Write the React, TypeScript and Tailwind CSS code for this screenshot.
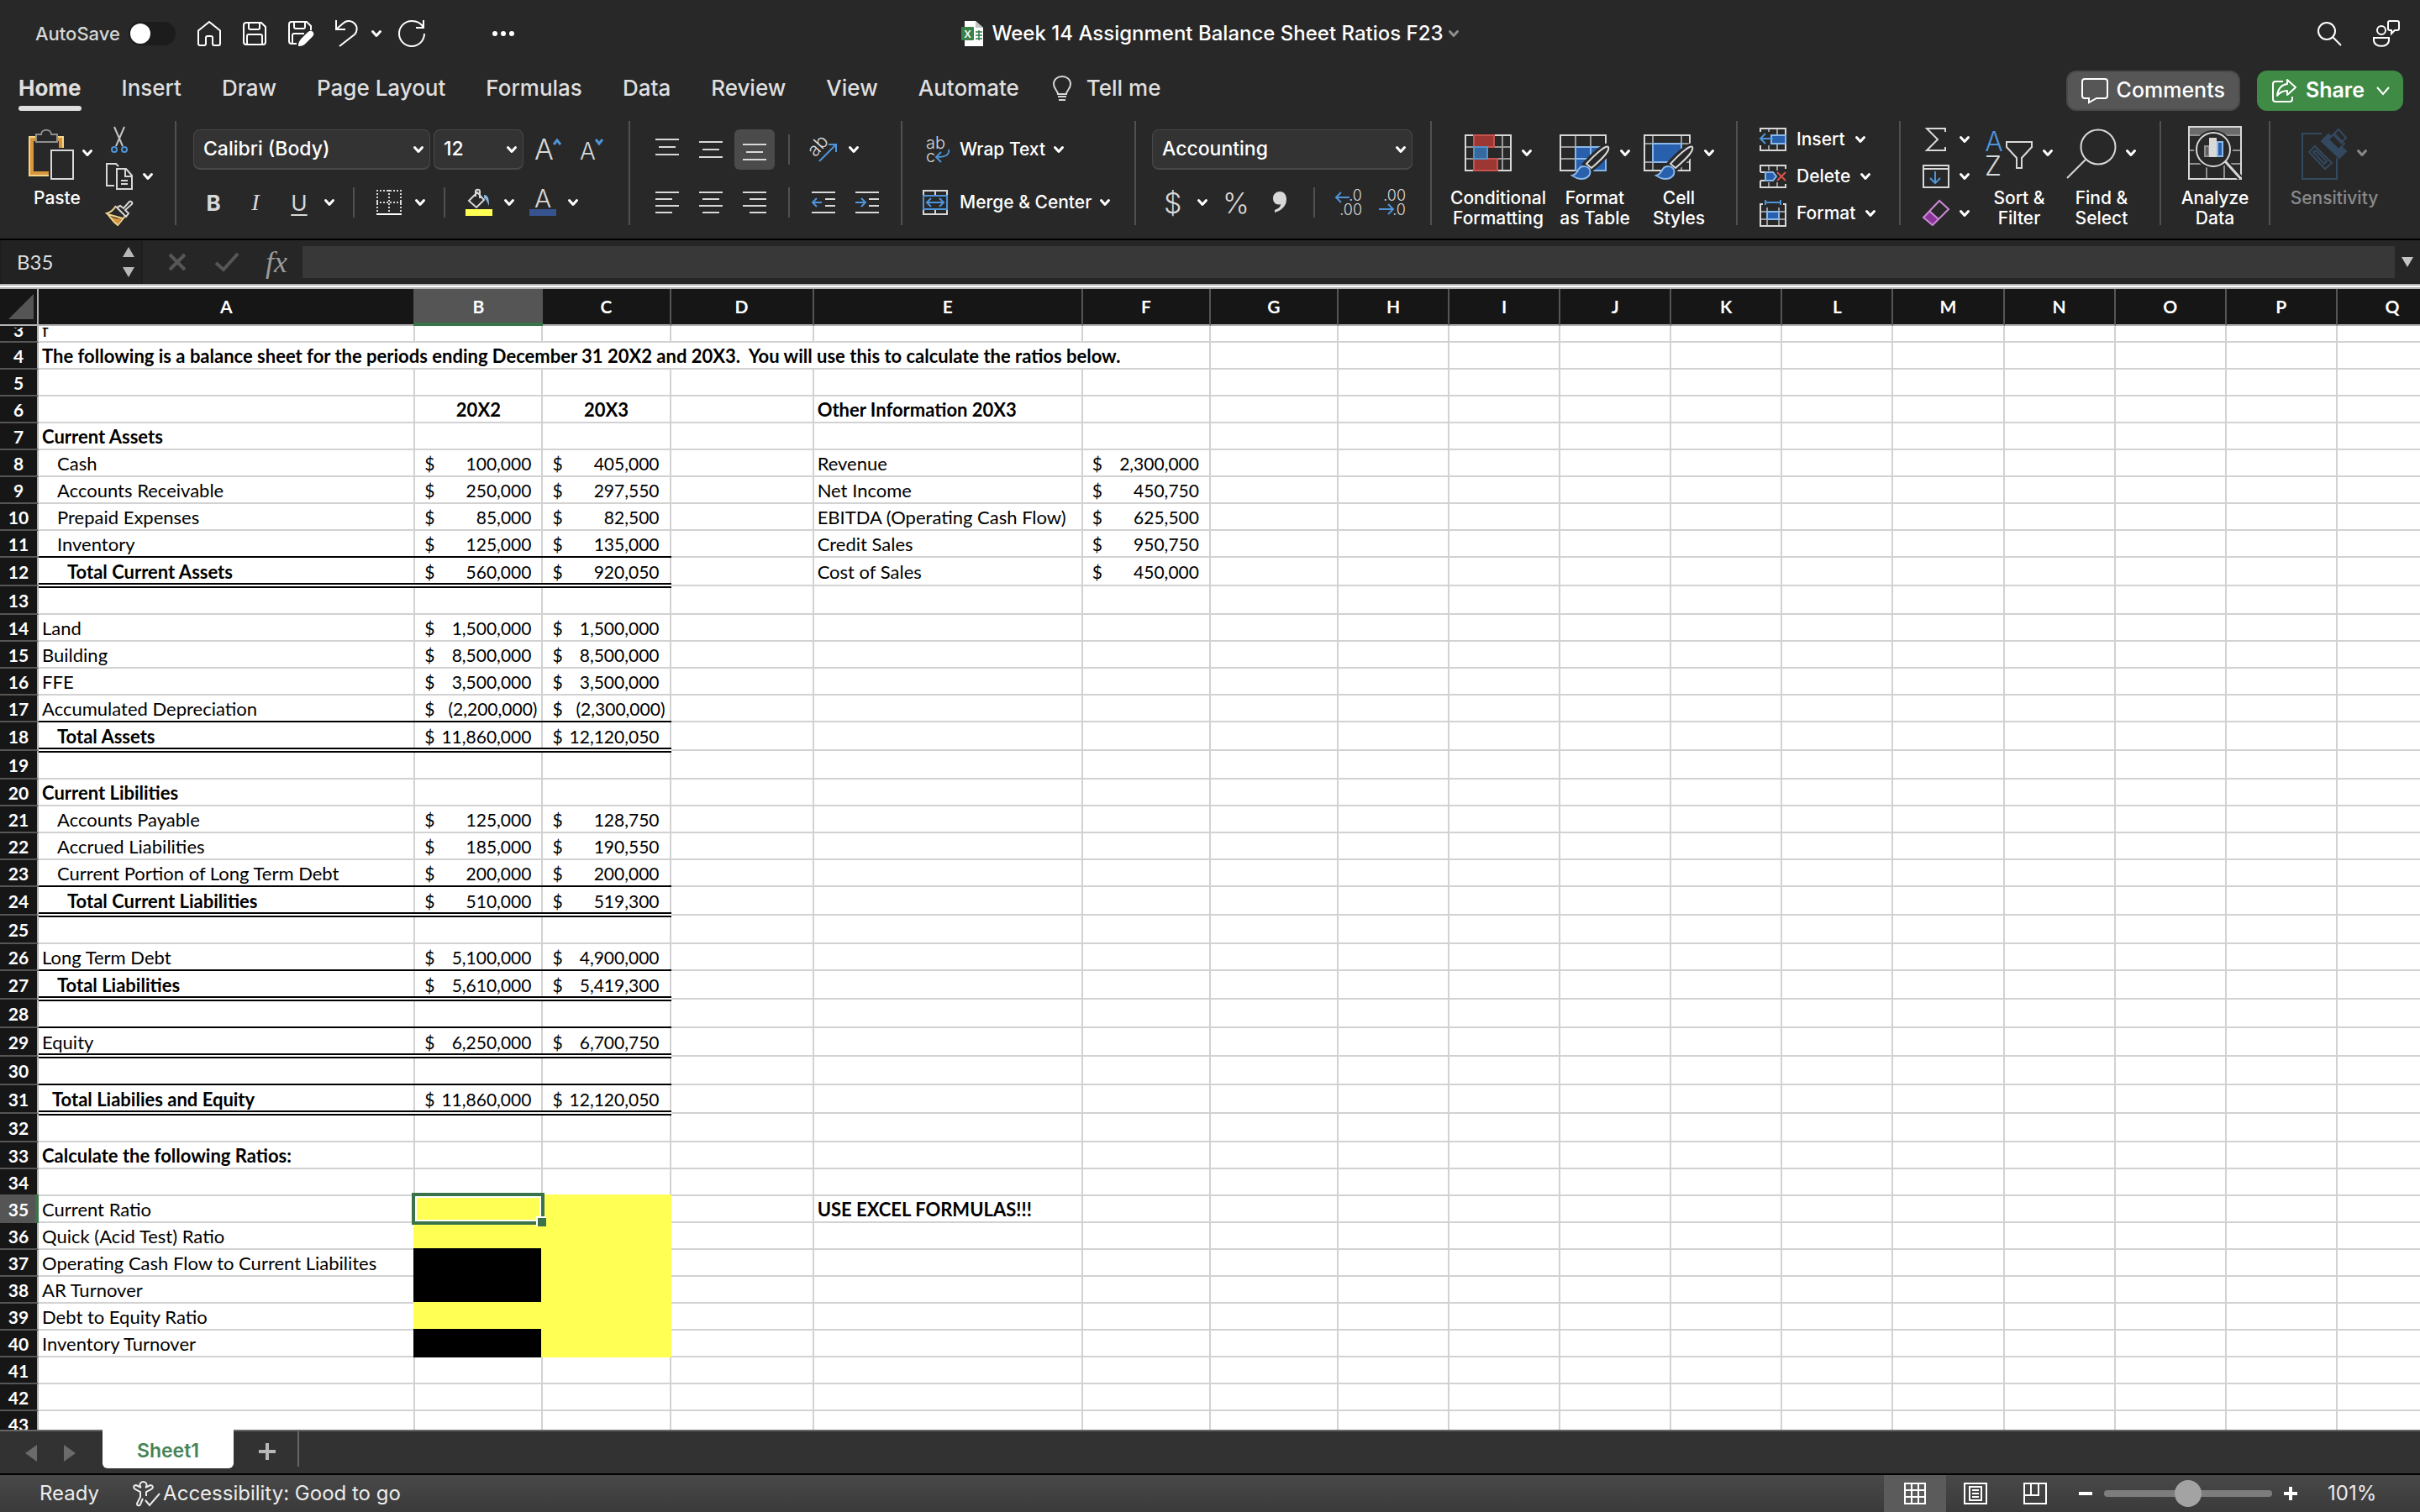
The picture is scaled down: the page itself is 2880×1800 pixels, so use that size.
import React from 'react';
import clsx from 'clsx';

/* ---------- data ---------- */

type Cell = {
  text?: string;
  money?: string;
  bold?: boolean;
  center?: boolean;
  indent?: number;
  fill?: 'yellow' | 'black';
  selected?: boolean;
};

type Row = {
  n: number;
  tall?: boolean;
  line?: 'single' | 'double';
  cells?: Record<string, Cell>;
};

const columns = [
  { name: 'A', width: 'w-[448px]' },
  { name: 'B', width: 'w-[152px]' },
  { name: 'C', width: 'w-[152px]' },
  { name: 'D', width: 'w-[170px]' },
  { name: 'E', width: 'w-[320px]' },
  { name: 'F', width: 'w-[152px]' },
  { name: 'G', width: 'w-[152px]' },
  { name: 'H', width: 'w-[132px]' },
  { name: 'I', width: 'w-[132px]' },
  { name: 'J', width: 'w-[132px]' },
  { name: 'K', width: 'w-[132px]' },
  { name: 'L', width: 'w-[132px]' },
  { name: 'M', width: 'w-[132px]' },
  { name: 'N', width: 'w-[132px]' },
  { name: 'O', width: 'w-[132px]' },
  { name: 'P', width: 'w-[132px]' },
  { name: 'Q', width: 'w-[132px]' },
];

const item = (text: string, b: string, c: string, indent = 0, bold = false): Record<string, Cell> => ({
  A: { text, indent, bold },
  B: { money: b },
  C: { money: c },
});

const info = (text: string, amount: string): Record<string, Cell> => ({
  E: { text },
  F: { money: amount },
});

const rows: Row[] = [
  { n: 5 },
  {
    n: 6,
    cells: {
      B: { text: '20X2', bold: true, center: true },
      C: { text: '20X3', bold: true, center: true },
      E: { text: 'Other Information 20X3', bold: true },
    },
  },
  { n: 7, cells: { A: { text: 'Current Assets', bold: true } } },
  { n: 8, cells: { ...item('Cash', '100,000', '405,000', 2), ...info('Revenue', '2,300,000') } },
  { n: 9, cells: { ...item('Accounts Receivable', '250,000', '297,550', 2), ...info('Net Income', '450,750') } },
  { n: 10, cells: { ...item('Prepaid Expenses', '85,000', '82,500', 2), ...info('EBITDA (Operating Cash Flow)', '625,500') } },
  { n: 11, line: 'single', cells: { ...item('Inventory', '125,000', '135,000', 2), ...info('Credit Sales', '950,750') } },
  { n: 12, tall: true, line: 'double', cells: { ...item('Total Current Assets', '560,000', '920,050', 3, true), ...info('Cost of Sales', '450,000') } },
  { n: 13, tall: true },
  { n: 14, cells: item('Land', '1,500,000', '1,500,000') },
  { n: 15, cells: item('Building', '8,500,000', '8,500,000') },
  { n: 16, cells: item('FFE', '3,500,000', '3,500,000') },
  { n: 17, line: 'single', cells: item('Accumulated Depreciation', '(2,200,000)', '(2,300,000)') },
  { n: 18, tall: true, line: 'double', cells: item('Total Assets', '11,860,000', '12,120,050', 2, true) },
  { n: 19, tall: true },
  { n: 20, cells: { A: { text: 'Current Libilities', bold: true } } },
  { n: 21, cells: item('Accounts Payable', '125,000', '128,750', 2) },
  { n: 22, cells: item('Accrued Liabilities', '185,000', '190,550', 2) },
  { n: 23, line: 'single', cells: item('Current Portion of Long Term Debt', '200,000', '200,000', 2) },
  { n: 24, tall: true, line: 'double', cells: item('Total Current Liabilities', '510,000', '519,300', 3, true) },
  { n: 25, tall: true },
  { n: 26, line: 'single', cells: item('Long Term Debt', '5,100,000', '4,900,000') },
  { n: 27, tall: true, line: 'double', cells: item('Total Liabilities', '5,610,000', '5,419,300', 2, true) },
  { n: 28, tall: true, line: 'single' },
  { n: 29, tall: true, line: 'double', cells: item('Equity', '6,250,000', '6,700,750') },
  { n: 30, tall: true, line: 'single' },
  { n: 31, tall: true, line: 'double', cells: item('Total Liabilies and Equity', '11,860,000', '12,120,050', 1, true) },
  { n: 32, tall: true },
  { n: 33, cells: { A: { text: 'Calculate the following Ratios:', bold: true } } },
  { n: 34 },
  {
    n: 35,
    cells: {
      A: { text: 'Current Ratio' },
      B: { fill: 'yellow', selected: true },
      C: { fill: 'yellow' },
      E: { text: 'USE EXCEL FORMULAS!!!', bold: true },
    },
  },
  { n: 36, cells: { A: { text: 'Quick (Acid Test) Ratio' }, B: { fill: 'yellow' }, C: { fill: 'yellow' } } },
  { n: 37, cells: { A: { text: 'Operating Cash Flow to Current Liabilites' }, B: { fill: 'black' }, C: { fill: 'yellow' } } },
  { n: 38, cells: { A: { text: 'AR Turnover' }, B: { fill: 'black' }, C: { fill: 'yellow' } } },
  { n: 39, cells: { A: { text: 'Debt to Equity Ratio' }, B: { fill: 'yellow' }, C: { fill: 'yellow' } } },
  { n: 40, cells: { A: { text: 'Inventory Turnover' }, B: { fill: 'black' }, C: { fill: 'yellow' } } },
  { n: 41 },
  { n: 42 },
  { n: 43 },
];

const indents = ['pl-1', 'pl-4', 'pl-[22px]', 'pl-[34px]'];

/* ---------- icons ---------- */

type IconProps = { w: number; h: number; className?: string; children: React.ReactNode };

const Icon = ({ w, h, className, children }: IconProps) => (
  <svg
    width={w}
    height={h}
    viewBox={`0 0 ${w} ${h}`}
    fill="none"
    stroke="#d8d8d8"
    strokeWidth="2"
    className={clsx('shrink-0 overflow-visible', className)}
    aria-hidden="true"
  >
    {children}
  </svg>
);

const Chevron = ({ className }: { className?: string }) => (
  <Icon w={12} h={8} className={className}>
    <path d="M1.5 1.5 6 6.5l4.5-5" stroke="currentColor" strokeWidth="3" strokeLinecap="round" strokeLinejoin="round" />
  </Icon>
);

const HomeIcon = () => (
  <Icon w={28} h={30}>
    <path d="M1 11.500 14 1l13 10.500V27a2 2 0 0 1-2 2h-5a2 2 0 0 1-2-2v-7a2 2 0 0 0-2-2h-4a2 2 0 0 0-2 2v7a2 2 0 0 1-2 2H3a2 2 0 0 1-2-2z" stroke="#fff" />
  </Icon>
);

const SaveIcon = () => (
  <Icon w={28} h={28}>
    <path d="M4 1h18l5 5v18a3 3 0 0 1-3 3H4a3 3 0 0 1-3-3V4a3 3 0 0 1 3-3zM7 1v6a2 2 0 0 0 2 2h9a2 2 0 0 0 2-2V1M5 27V17a2 2 0 0 1 2-2h14a2 2 0 0 1 2 2v10" stroke="#fff" />
  </Icon>
);

const SaveEditIcon = () => (
  <Icon w={30} h={30}>
    <path d="M10 27H4a3 3 0 0 1-3-3V4a3 3 0 0 1 3-3h18l5 5v5M7 1v6a2 2 0 0 0 2 2h9a2 2 0 0 0 2-2V1M5 27V17a2 2 0 0 1 2-2h12" stroke="#fff" />
    <path d="M13 29c0-4 2-6 4-8l7-7c4-3 7 1 4 4l-8 8c-2 2-4 3-7 3z" fill="#fff" stroke="#fff" />
  </Icon>
);

const UndoIcon = () => (
  <Icon w={27} h={32}>
    <path d="M1 0v11h11M1 11 9 4c5-5 11-3 14 0 4 4 3 10 0 13L5 31" stroke="#fff" />
  </Icon>
);

const RedoIcon = () => (
  <Icon w={32} h={32}>
    <path d="M30 0v9h-9M30 9C27 3 21 1 16 1a15 15 0 1 0 15 15" stroke="#fff" />
  </Icon>
);

const ExcelIcon = () => (
  <Icon w={26} h={30}>
    <path d="M4 0h13l9 8v22H4z" fill="#fff" stroke="none" />
    <path d="M17 0v8h9z" fill="#c4c4c4" stroke="none" />
    <path d="M17 13h8M17 17h8M17 21h8M21 11v12" stroke="#2f7d46" strokeWidth="1.500" />
    <rect y="7" width="15" height="16" rx="1" fill="#3b8049" stroke="none" />
    <text x="7.500" y="19.500" textAnchor="middle" fontSize="12" fontWeight="600" fill="#fff" stroke="none">X</text>
  </Icon>
);

const PasteIcon = () => (
  <Icon w={54} h={60}>
    <path d="M10 9H1v46h23" stroke="#f3d58c" />
    <path d="M33 9h8v13" stroke="#f3d58c" />
    <path d="M10 12H4v40h20M33 12h5v10" stroke="#d9953c" strokeWidth="4" />
    <path d="M9 6h6c0-7 12-7 12 0h7v9H9z" fill="#282828" stroke="#8f8f8f" />
    <rect x="27" y="25" width="26" height="34" />
  </Icon>
);

const CutIcon = () => (
  <Icon w={20} h={32}>
    <path d="M4 1l10 23M16 1 6 24" stroke="#c4c4c4" />
    <circle cx="4" cy="28" r="3" stroke="#4f94d8" />
    <circle cx="16" cy="28" r="3" stroke="#4f94d8" />
  </Icon>
);

const CopyIcon = () => (
  <Icon w={32} h={32}>
    <path d="M10 27H1V1h11l3 3M13 7h11l7 8v16H13zM23 7v9h8M18 21h8M18 25h8" />
  </Icon>
);

const BrushIcon = () => (
  <Icon w={32} h={30}>
    <path d="M4 18c6 3 10 4 15 3l-5 7c-4-2-6-7-10-10z" fill="#d9953c" stroke="none" />
    <path d="M12 6C9 11 5 14 1 15c4 3 6 9 13 14 3-3 6-7 9-11M2 16l18 5" stroke="#f3d58c" />
    <path d="M13 8l11 11 3-4-4-4 8-7c1-2-1-4-3-3l-7 8-4-3z" fill="#282828" />
  </Icon>
);

const GrowFontIcon = ({ shrink }: { shrink?: boolean }) => (
  <Icon w={30} h={28}>
    <text x="-1" y="26" fontSize={shrink ? 28 : 34} fontWeight="300" fill="#d8d8d8" stroke="none">A</text>
    <path d={shrink ? 'M18 2l4 5 4-5' : 'M22 8l4-5 4 5'} stroke="#4f94d8" strokeWidth="3" />
  </Icon>
);

const BordersIcon = () => (
  <Icon w={30} h={30}>
    <path d="M1 0v28M15 0v28M29 0v28M0 1h30M0 15h30" strokeDasharray="2 2" />
    <path d="M0 29h30" stroke="#fff" />
  </Icon>
);

const FillIcon = () => (
  <Icon w={32} h={32}>
    <path d="M14 4 4 14l9 8 9-9zM12 9V3c0-3 5-3 5 0v8" />
    <path d="M22 7c5 0 6 5 6 13-2-4-3-8-6-9z" fill="#8ab8e8" stroke="none" />
    <path d="M0 28h32" stroke="#ffff54" strokeWidth="8" />
  </Icon>
);

const FontColorIcon = () => (
  <Icon w={32} h={32}>
    <text x="16" y="22" textAnchor="middle" fontSize="30" fontWeight="300" fill="#d8d8d8" stroke="none">A</text>
    <path d="M0 28h32" stroke="#36528f" strokeWidth="8" />
  </Icon>
);

const LinesIcon = ({ d }: { d: string }) => (
  <Icon w={28} h={26}>
    <path d={d} />
  </Icon>
);

const OrientationIcon = () => (
  <Icon w={32} h={30}>
    <text x="4" y="24" fontSize="22" fontWeight="300" fill="#d8d8d8" stroke="none" transform="rotate(-48 6 22)">ab</text>
    <path d="M11 29 31 9M22 9h9v9" stroke="#4f94d8" />
  </Icon>
);

const IndentIcon = ({ inward }: { inward?: boolean }) => (
  <Icon w={28} h={26}>
    <path d="M0 1h28M16 9h12M16 17h12M0 25h28" />
    <path d={inward ? 'M0 13h11M7 8l5 5-5 5' : 'M12 13H1M6 8l-5 5 5 5'} stroke="#4f94d8" />
  </Icon>
);

const WrapIcon = () => (
  <Icon w={32} h={32}>
    <text x="4" y="15" fontSize="20" fontWeight="300" fill="#d8d8d8" stroke="none">ab</text>
    <text x="4" y="31" fontSize="20" fontWeight="300" fill="#d8d8d8" stroke="none">c</text>
    <path d="M31 16c1 6-3 9-14 9M22 19l-6 6 6 6" stroke="#4f94d8" />
  </Icon>
);

const MergeIcon = () => (
  <Icon w={30} h={30}>
    <path d="M1 1h28v28H1zM15 1v6M15 23v6" />
    <path d="M1 7h28v16H1zM5 15h20M10 10l-5 5 5 5M20 10l5 5-5 5" stroke="#4f94d8" />
  </Icon>
);

const DecimalIcon = ({ decrease }: { decrease?: boolean }) => (
  <Icon w={32} h={30}>
    <g fill="#d8d8d8" stroke="none" fontSize="18" fontWeight="300" textAnchor="end">
      <text x="32" y="13">{decrease ? '.00' : '.0'}</text>
      <text x="32" y="30">{decrease ? '.0' : '.00'}</text>
    </g>
    <path d={decrease ? 'M0 23h16M11 17l6 6-6 6' : 'M17 9H1M7 3 1 9l6 6'} stroke="#4f94d8" />
  </Icon>
);

const ConditionalIcon = () => (
  <Icon w={56} h={44}>
    <path d="M11 1v42M33 1v42M45 1v42M1 15h54M1 29h54" stroke="#9a9a9a" />
    <rect x="1" y="1" width="54" height="42" />
    <path d="M28 16h16v12H28z" fill="#282828" stroke="none" />
    <path d="M11 1h24v14H11zM11 29h28v14H11z" fill="#9c3733" stroke="#c9524e" />
    <path d="M11 15h16v14H11z" fill="#36699f" stroke="#5592c4" />
  </Icon>
);

const Paintbrush = () => (
  <>
    <path d="M58 15c2 4-4 11-20 25l-6-5C44 22 56 12 58 15z" fill="#282828" stroke="#282828" strokeWidth="8" />
    <path d="M58 15c2 4-4 11-20 25l-6-5C44 22 56 12 58 15z" fill="#282828" />
    <path d="M15 49c5-1 6-5 8-8 3-4 11-4 13 1 2 6-3 11-10 11-5 0-8-2-11-4z" fill="#2860ad" stroke="#8ab8e8" />
  </>
);

const FormatTableIcon = () => (
  <Icon w={60} h={54}>
    <path d="M19 1v42M37 1v42M1 15h54M1 29h54" stroke="#9a9a9a" />
    <rect x="1" y="1" width="54" height="42" />
    <path d="M19 15h36v28H19zM37 15v28M19 29h36" fill="#2860ad" stroke="#8ab8e8" />
    <Paintbrush />
  </Icon>
);

const CellStylesIcon = () => (
  <Icon w={60} h={54}>
    <path d="M11 1v42M45 1v42M1 11h54M1 33h54" stroke="#9a9a9a" />
    <rect x="1" y="1" width="54" height="42" />
    <path d="M11 11h34v22H11z" fill="#2860ad" stroke="#8ab8e8" />
    <Paintbrush />
  </Icon>
);

const InsertIcon = () => (
  <Icon w={32} h={28}>
    <path d="M11 1v26M21 1v26M1 9h30M1 19h30" stroke="#9a9a9a" />
    <rect x="1" y="1" width="30" height="26" />
    <path d="M0 5h16v16H0z" fill="#282828" stroke="none" />
    <path d="M14 9h17v10H14z" fill="#2860ad" stroke="#8ab8e8" />
    <path d="M16 13H1M7 7l-6 6 6 6" stroke="#4f94d8" />
  </Icon>
);

const DeleteIcon = () => (
  <Icon w={32} h={28}>
    <path d="M11 1v6M21 1v6M11 21v6M21 21v6" stroke="#9a9a9a" />
    <path d="M1 9V1h30v4M1 19v8h30v-4M1 9h6M1 19h6" />
    <path d="M7 9h9l4 5-4 5H7z" fill="#2860ad" stroke="#8ab8e8" />
    <path d="M21 9l10 10M31 9 21 19" stroke="#d9534a" />
  </Icon>
);

const FormatIcon = () => (
  <Icon w={32} h={32}>
    <path d="M9 9v22M23 9v22M1 14h30M1 23h30" stroke="#9a9a9a" />
    <path d="M4 5H1v26h30V5h-3" />
    <path d="M9 14h14v9H9z" fill="#2860ad" stroke="#8ab8e8" />
    <path d="M7 3h18M7 0v6M25 0v6" stroke="#4f94d8" />
  </Icon>
);

const SumIcon = () => (
  <Icon w={32} h={28}>
    <path d="M27 5V1H5l13 13L5 27h22v-4" />
  </Icon>
);

const FillDownIcon = () => (
  <Icon w={32} h={28}>
    <path d="M1 1h30v26H1zM1 5h30" />
    <path d="M15 8v14M9 16l6 6 6-6" stroke="#4f94d8" />
  </Icon>
);

const EraserIcon = () => (
  <Icon w={32} h={32}>
    <path d="M1 21l7-8 11 10-8 8z" fill="#8b349b" stroke="none" />
    <path d="M1 21 20 1l11 10-19 19zM8 13l11 10" stroke="#cb8bd6" />
  </Icon>
);

const SortIcon = () => (
  <Icon w={56} h={52}>
    <text x="10" y="24" textAnchor="middle" fontSize="32" fontWeight="300" fill="#4f94d8" stroke="none">A</text>
    <text x="9" y="53" textAnchor="middle" fontSize="32" fontWeight="300" fill="#d8d8d8" stroke="none">Z</text>
    <path d="M25 13h30v6L43 32v12h-6V32L25 19z" />
  </Icon>
);

const FindIcon = () => (
  <Icon w={58} h={58}>
    <circle cx="37" cy="21" r="20.500" />
    <path d="M22 36 0 58" />
  </Icon>
);

const AnalyzeIcon = () => (
  <Icon w={64} h={64}>
    <path d="M2 2h60v8H2z" fill="#6b6b6b" stroke="none" />
    <path d="M1 11h62M1 29h62M1 45h62M22 45v18M43 45v18" stroke="#8f8f8f" />
    <rect x="1" y="1" width="62" height="62" />
    <circle cx="30" cy="28" r="23" fill="#282828" stroke="none" />
    <path d="M44 42l18 20" stroke="#282828" strokeWidth="7" />
    <circle cx="30" cy="28" r="20" />
    <path d="M44 42l19 21" strokeWidth="3" />
    <path d="M20 24h5v12h-5z" fill="#5e5e5e" stroke="#8f8f8f" />
    <path d="M35 19h6v17h-6z" fill="#2860ad" stroke="#8ab8e8" />
    <path d="M25 14h9v23h-9z" fill="#d8d8d8" stroke="none" />
  </Icon>
);

const SensitivityIcon = () => (
  <Icon w={54} h={60}>
    <g stroke="#33495f">
      <path d="M24 5H1v54h41V34" />
      <path d="M9 27l7-7 20 20-8 7zM14 27l3-2 13 13-3 3z" />
      <path d="M24 14l8-8 21 20-8 8z" fill="#33495f" />
      <path d="M32 12l7-7 12 12-7 7z" fill="#282828" />
      <path d="M38 6l6-6 9 10-6 6z" />
    </g>
  </Icon>
);

/* ---------- ribbon pieces ---------- */

const Separator = ({ className }: { className?: string }) => <span className={clsx('h-9 w-0.5 bg-[#505050]', className)} />;

const Group = ({ className, children }: { className: string; children: React.ReactNode }) => (
  <section className={clsx('h-[124px] shrink-0', className)}>{children}</section>
);

const Tool = ({ label, className, children }: { label: string; className?: string; children: React.ReactNode }) => (
  <button type="button" aria-label={label} className={clsx('flex shrink-0 items-center', className)}>
    {children}
  </button>
);

const Dropdown = ({ label, value, className }: { label: string; value: string; className: string }) => (
  <div className={clsx('relative', className)}>
    <select
      aria-label={label}
      defaultValue={value}
      className="h-12 w-full appearance-none rounded-lg border border-b-2 border-[#484848] bg-[#333333] pl-[11px] text-[23px] font-medium text-white"
    >
      <option>{value}</option>
    </select>
    <Chevron className="pointer-events-none absolute top-5 right-2" />
  </div>
);

const BigButton = ({ icon, lines, className, muted }: { icon: React.ReactNode; lines: string[]; className?: string; muted?: boolean }) => (
  <button type="button" className={clsx('flex shrink-0 flex-col items-center self-start', className, muted ? 'text-[#8a8a8a]' : 'text-white')}>
    <span className="flex h-20 items-start gap-3 pt-2.5">
      {icon}
      <Chevron className="mt-6" />
    </span>
    <span className="text-[21px] leading-6 font-medium">
      {lines.map((line) => (
        <span key={line} className="block">{line}</span>
      ))}
    </span>
  </button>
);

const SmallButton = ({ icon, label }: { icon: React.ReactNode; label: string }) => (
  <button type="button" className="flex h-11 items-center text-[21px] font-medium text-white">
    {icon}
    <span className="ml-3">{label}</span>
    <Chevron className="ml-3" />
  </button>
);

const TitleBar = () => (
  <header className="grid h-20 grid-cols-[1fr_auto_1fr] items-center text-white">
    <div className="flex items-center pl-[42px]">
      <label className="flex items-center gap-2.5 text-[22px] font-medium text-[#d6d6d6]">
        AutoSave
        <input
          type="checkbox"
          className="h-7 w-14 appearance-none rounded-full bg-[#1c1c1c] before:block before:size-6 before:translate-x-0.5 before:translate-y-0.5 before:rounded-full before:bg-white"
        />
      </label>
      <Tool label="Home" className="ml-[26px]"><HomeIcon /></Tool>
      <Tool label="Save" className="ml-[26px]"><SaveIcon /></Tool>
      <Tool label="Save as" className="ml-[26px]"><SaveEditIcon /></Tool>
      <Tool label="Undo" className="ml-[26px]"><UndoIcon /></Tool>
      <Tool label="Undo history" className="ml-4"><Chevron /></Tool>
      <Tool label="Redo" className="ml-5"><RedoIcon /></Tool>
      <Tool label="More commands" className="ml-20">
        <Icon w={28} h={6}>
          <g fill="#fff" stroke="none">
            <circle cx="3" cy="3" r="3" />
            <circle cx="13" cy="3" r="3" />
            <circle cx="23" cy="3" r="3" />
          </g>
        </Icon>
      </Tool>
    </div>
    <button type="button" className="flex items-center">
      <ExcelIcon />
      <span className="ml-2.5 text-[24px] font-medium">Week 14 Assignment Balance Sheet Ratios F23</span>
      <Chevron className="ml-1.5 text-[#8f8f8f]" />
    </button>
    <div className="flex items-center justify-end gap-[38px] pr-6">
      <Tool label="Search">
        <Icon w={28} h={28}>
          <circle cx="11" cy="11" r="10" stroke="#fff" />
          <path d="M18 18l10 10" stroke="#fff" />
        </Icon>
      </Tool>
      <Tool label="Presence">
        <Icon w={32} h={32}>
          <circle cx="10" cy="12" r="5" stroke="#fff" />
          <path d="M1 21h18v3c0 9-18 9-18 0zM20 1h9a2 2 0 0 1 2 2v7a2 2 0 0 1-2 2h-3l-4 4v-4h-2a2 2 0 0 1-2-2V3a2 2 0 0 1 2-2z" stroke="#fff" />
        </Icon>
      </Tool>
    </div>
  </header>
);

const tabs = ['Home', 'Insert', 'Draw', 'Page Layout', 'Formulas', 'Data', 'Review', 'View', 'Automate'];

const TabBar = () => (
  <nav className="flex h-14 items-start pt-1 pr-5 pl-[22px] text-[26px] text-[#dfdfdf]">
    <div className="flex gap-12">
      {tabs.map((tab) => (
        <a key={tab} href="#" className={clsx('block leading-[42px]', tab === 'Home' ? 'font-bold' : 'font-medium')}>
          {tab}
          {tab === 'Home' && <span className="block h-1.5 rounded-full bg-[#dfdfdf]" />}
        </a>
      ))}
    </div>
    <button type="button" className="ml-10 flex items-center font-medium leading-[42px]">
      <Icon w={22} h={30}>
        <path d="M6 22c0-4-5-6-5-12C1 5 5 1 11 1s10 4 10 9c0 6-5 8-5 12zM6 25h10M7 29h8" />
      </Icon>
      <span className="ml-[18px]">Tell me</span>
    </button>
    <button type="button" className="ml-auto flex h-12 items-center rounded-xl border-2 border-[#4a4a4a] bg-[#565656] px-4 text-[25px] font-medium text-white">
      <Icon w={32} h={30}>
        <path d="M4 1h24a3 3 0 0 1 3 3v17a3 3 0 0 1-3 3H18l-9 5v-5H4a3 3 0 0 1-3-3V4a3 3 0 0 1 3-3z" stroke="#fff" />
      </Icon>
      <span className="ml-2.5">Comments</span>
    </button>
    <button type="button" className="ml-5 flex h-12 items-center rounded-xl bg-[#3f8a45] px-4 text-[25px] font-semibold text-white">
      <Icon w={32} h={28}>
        <path d="M15 3H6a3 3 0 0 0-3 3v18a3 3 0 0 0 3 3h17a3 3 0 0 0 3-3v-3M20 1l10 9-10 9v-5c-6 0-9 2-12 6 1-9 5-13 12-14z" stroke="#fff" strokeLinejoin="round" />
      </Icon>
      <span className="ml-2.5">Share</span>
      <Icon w={16} h={10} className="ml-3.5">
        <path d="M1 1l7 8 7-8" stroke="#fff" />
      </Icon>
    </button>
  </nav>
);

const alignments = [
  { label: 'Top align', d: 'M0 1h28M4 10h20M0 19h28' },
  { label: 'Middle align', d: 'M0 4h28M4 13h20M0 22h28' },
  { label: 'Bottom align', d: 'M0 7h28M4 16h20M0 25h28' },
];

const justifications = [
  { label: 'Align left', d: 'M0 1h28M0 9h20M0 17h28M0 25h20' },
  { label: 'Center', d: 'M0 1h28M4 9h20M0 17h28M4 25h20' },
  { label: 'Align right', d: 'M0 1h28M8 9h20M0 17h28M8 25h20' },
];

const Ribbon = () => (
  <div className="flex h-[150px] shrink-0 overflow-hidden border-b-2 border-black pt-2 text-white">
    <Group className="flex w-[210px] border-r-2 border-[#505050] pl-[34px]">
      <button type="button" className="flex shrink-0 flex-col items-start">
        <span className="flex h-20 items-start gap-2.5 pt-2.5">
          <PasteIcon />
          <Chevron className="mt-6" />
        </span>
        <span className="pl-1.5 text-[21px] leading-6 font-medium">Paste</span>
      </button>
      <div className="ml-4 w-14 shrink-0">
        <Tool label="Cut" className="h-11 pl-1.5"><CutIcon /></Tool>
        <Tool label="Copy" className="h-11 gap-3"><CopyIcon /><Chevron /></Tool>
        <Tool label="Format painter" className="h-11"><BrushIcon /></Tool>
      </div>
    </Group>

    <Group className="w-[540px] border-r-2 border-[#505050] pt-2.5 pl-5">
      <div className="flex h-12 items-center">
        <Dropdown label="Font" value="Calibri (Body)" className="w-[282px]" />
        <Dropdown label="Font size" value="12" className="ml-1 w-[107px]" />
        <Tool label="Increase font size" className="ml-3.5"><GrowFontIcon /></Tool>
        <Tool label="Decrease font size" className="ml-6"><GrowFontIcon shrink /></Tool>
      </div>
      <div className="mt-5 flex h-[38px] items-center text-[26px] text-[#d8d8d8]">
        <Tool label="Bold" className="w-12 justify-center font-bold">B</Tool>
        <Tool label="Italic" className="w-[52px] justify-center font-['Liberation_Serif'] text-[28px] italic">I</Tool>
        <Tool label="Underline" className="w-[52px] justify-center underline underline-offset-4">U</Tool>
        <Chevron className="ml-1 text-white" />
        <Separator className="ml-[22px]" />
        <Tool label="Borders" className="ml-[26px] gap-4 text-white"><BordersIcon /><Chevron /></Tool>
        <Separator className="ml-[22px]" />
        <Tool label="Fill color" className="ml-6 gap-3.5 text-white"><FillIcon /><Chevron /></Tool>
        <Tool label="Font color" className="ml-[18px] gap-3.5 text-white"><FontColorIcon /><Chevron /></Tool>
      </div>
    </Group>

    <Group className="w-[324px] border-r-2 border-[#505050] pt-2.5 pl-5">
      <div className="flex h-12 items-center">
        <div className="flex gap-1">
          {alignments.map((a) => (
            <Tool key={a.label} label={a.label} className={clsx('h-12 w-12 justify-center rounded-md', a.label === 'Bottom align' && 'bg-[#4b4b4b]')}>
              <LinesIcon d={a.d} />
            </Tool>
          ))}
        </div>
        <Separator className="ml-4" />
        <Tool label="Orientation" className="ml-6 gap-3.5"><OrientationIcon /><Chevron /></Tool>
      </div>
      <div className="mt-5 flex h-[38px] items-center">
        <div className="flex gap-1">
          {justifications.map((a) => (
            <Tool key={a.label} label={a.label} className="w-12 justify-center"><LinesIcon d={a.d} /></Tool>
          ))}
        </div>
        <Separator className="ml-4" />
        <Tool label="Decrease indent" className="ml-4 w-12 justify-center"><IndentIcon /></Tool>
        <Tool label="Increase indent" className="ml-1 w-12 justify-center"><IndentIcon inward /></Tool>
      </div>
    </Group>

    <Group className="w-[278px] border-r-2 border-[#505050] pt-2.5 pl-6 text-[21px] font-medium">
      <button type="button" className="flex h-12 items-center">
        <WrapIcon />
        <span className="ml-3">Wrap Text</span>
        <Chevron className="ml-2.5" />
      </button>
      <button type="button" className="mt-5 flex h-[38px] items-center">
        <MergeIcon />
        <span className="ml-3.5">Merge &amp; Center</span>
        <Chevron className="ml-2.5" />
      </button>
    </Group>

    <Group className="w-[352px] border-r-2 border-[#505050] pt-2.5 pl-[19px]">
      <Dropdown label="Number format" value="Accounting" className="w-[310px]" />
      <div className="mt-5 flex h-[38px] items-center pl-3.5 text-[34px] font-light text-[#d8d8d8]">
        <Tool label="Accounting number format" className="w-10">$</Tool>
        <Chevron className="text-white" />
        <Tool label="Percent style" className="ml-4 w-9 justify-center">%</Tool>
        <Tool label="Comma style" className="ml-[26px] w-5">
          <Icon w={16} h={26}>
            <path d="M8 0c5 0 8 4 8 9 0 8-5 13-14 16v-3c5-2 7-4 7-7-5 2-9-2-9-7 0-5 4-8 8-8z" fill="#d8d8d8" stroke="none" />
          </Icon>
        </Tool>
        <Separator className="ml-7" />
        <Tool label="Increase decimal" className="ml-6"><DecimalIcon /></Tool>
        <Tool label="Decrease decimal" className="ml-5"><DecimalIcon decrease /></Tool>
      </div>
    </Group>

    <Group className="flex w-[364px] gap-1.5 border-r-2 border-[#505050] pl-[19px]">
      <BigButton icon={<span className="pt-1.5"><ConditionalIcon /></span>} lines={['Conditional', 'Formatting']} className="w-[120px]" />
      <BigButton icon={<span className="pt-1.5"><FormatTableIcon /></span>} lines={['Format', 'as Table']} className="w-[98px]" />
      <BigButton icon={<span className="pt-1.5"><CellStylesIcon /></span>} lines={['Cell', 'Styles']} className="w-[90px]" />
    </Group>

    <Group className="w-[194px] border-r-2 border-[#505050] pl-[26px]">
      <SmallButton icon={<InsertIcon />} label="Insert" />
      <SmallButton icon={<DeleteIcon />} label="Delete" />
      <SmallButton icon={<FormatIcon />} label="Format" />
    </Group>

    <Group className="flex w-[310px] border-r-2 border-[#505050] pl-[26px]">
      <div className="shrink-0">
        <Tool label="AutoSum" className="h-11 gap-3"><SumIcon /><Chevron /></Tool>
        <Tool label="Fill" className="h-11 gap-3"><FillDownIcon /><Chevron /></Tool>
        <Tool label="Clear" className="h-11 gap-3"><EraserIcon /><Chevron /></Tool>
      </div>
      <BigButton icon={<span className="pt-0.5"><SortIcon /></span>} lines={['Sort &', 'Filter']} className="ml-3.5 w-[90px]" />
      <BigButton icon={<FindIcon />} lines={['Find &', 'Select']} className="ml-2 w-[90px]" />
    </Group>

    <Group className="w-[130px] border-r-2 border-[#505050] text-center">
      <button type="button" className="text-[21px] leading-6 font-medium">
        <span className="flex h-20 justify-center pt-1.5"><AnalyzeIcon /></span>
        <span className="block">Analyze</span>
        <span className="block">Data</span>
      </button>
    </Group>

    <Group className="w-[152px]">
      <BigButton icon={<SensitivityIcon />} lines={['Sensitivity']} className="w-full" muted />
    </Group>
  </div>
);

const FormulaBar = () => (
  <div className="flex h-[52px] shrink-0 items-center bg-[#262626] font-['Lato']">
    <div className="flex h-full w-[170px] items-center border-x-2 border-[#1e1e1e] bg-[#222222]">
      <input aria-label="Name box" defaultValue="B35" className="w-36 bg-transparent pl-[18px] text-[24px] text-[#dfdfdf]" />
      <Icon w={14} h={36}>
        <path d="M7 0l7 12H0zM7 36l7-12H0z" fill="#b8b8b8" stroke="none" />
      </Icon>
    </div>
    <Icon w={22} h={22} className="ml-[30px]">
      <path d="M2 2l18 18M20 2 2 20" stroke="#565656" strokeWidth="4" />
    </Icon>
    <Icon w={28} h={22} className="ml-[34px]">
      <path d="M1 12l9 8L27 1" stroke="#565656" strokeWidth="4" />
    </Icon>
    <span className="ml-8 w-11 font-['Liberation_Serif'] text-[36px] leading-9 italic text-[#9a9a9a]">fx</span>
    <input aria-label="Formula bar" className="h-[38px] min-w-0 flex-1 bg-[#383838] px-3 text-[24px] text-white" />
    <Icon w={14} h={12} className="mx-2">
      <path d="M0 0h14L7 12z" fill="#c4c4c4" stroke="none" />
    </Icon>
  </div>
);

/* ---------- sheet ---------- */

const CellContent = ({ cell }: { cell: Cell }) => {
  if (cell.money) {
    return (
      <span className={clsx('flex justify-between pl-[11px] text-[21px]', cell.money.startsWith('(') ? 'pr-[5px]' : 'pr-3')}>
        <span>$</span>
        <span>{cell.money}</span>
      </span>
    );
  }
  return (
    <span className={clsx('block', cell.bold && 'font-bold', cell.center ? 'text-center' : indents[cell.indent ?? 0])}>
      {cell.text}
    </span>
  );
};

const RowHeader = ({ n }: { n: number }) => (
  <th
    scope="row"
    className={clsx(
      'relative border-r-2 border-b-2 border-r-[#b3b3b3] border-b-[#555555] text-center text-[21px] font-bold text-white',
      n === 35 ? 'bg-[#555555]' : 'bg-[#161616]'
    )}
  >
    {n}
    {n === 35 && <span className="absolute -top-0.5 -right-0.5 -bottom-0.5 w-1 bg-[#3a7349]" />}
  </th>
);

const Sheet = () => (
  <div className="min-h-0 flex-1 overflow-hidden bg-white font-['Lato'] text-[22px] leading-[26px] text-black">
    <table className="w-[2914px] table-fixed border-separate border-spacing-0 whitespace-nowrap">
      <colgroup>
        <col className="w-[46px]" />
        {columns.map((c) => (
          <col key={c.name} className={c.width} />
        ))}
      </colgroup>
      <thead>
        <tr className="h-11 bg-[#161616] text-[21px] text-white">
          <th aria-label="Select all" className="border-r-2 border-b-2 border-[#b3b3b3]">
            <Icon w={30} h={30} className="ml-2.5">
              <path d="M30 0v30H0z" fill="#555555" stroke="none" />
            </Icon>
          </th>
          {columns.map(({ name }) => (
            <th
              key={name}
              scope="col"
              className={clsx(
                'relative border-r-2 border-b-2 border-r-[#555555] border-b-[#b3b3b3] font-bold',
                name === 'B' && 'bg-[#555555]'
              )}
            >
              {name}
              {name === 'B' && <span className="absolute -right-0.5 -bottom-0.5 -left-0.5 h-1 bg-[#3a7349]" />}
            </th>
          ))}
        </tr>
      </thead>
      <tbody className="[&_td]:pt-0.5 [&_th]:pt-0.5">
        {/* row 3 is scrolled part way under the column headers */}
        <tr>
          <th scope="row" className="border-r-2 border-b-2 border-r-[#b3b3b3] border-b-[#555555] bg-[#161616] text-[21px] font-bold text-white">
            <span className="flex h-4 items-end justify-center overflow-hidden">3</span>
          </th>
          {columns.map(({ name }) => (
            <td key={name} className="border-r-2 border-b-2 border-[#d2d2d2]">
              <span className="flex h-4 items-end overflow-hidden pl-1">{name === 'A' && 'f'}</span>
            </td>
          ))}
        </tr>
        <tr className="h-8">
          <RowHeader n={4} />
          <td colSpan={6} className="border-r-2 border-b-2 border-[#d2d2d2] pl-1 font-bold whitespace-pre">
            The following is a balance sheet for the periods ending December 31 20X2 and 20X3.{'  '}You will use this to calculate the ratios below.
          </td>
          {columns.slice(6).map(({ name }) => (
            <td key={name} className="border-r-2 border-b-2 border-[#d2d2d2]" />
          ))}
        </tr>
        {rows.map((row) => (
          <tr key={row.n} className={row.tall ? 'h-[34px]' : 'h-8'}>
            <RowHeader n={row.n} />
            {columns.map(({ name }, i) => {
              const cell = row.cells?.[name];
              return (
                <td key={name} className="relative border-r-2 border-b-2 border-[#d2d2d2]">
                  {cell?.fill && (
                    <span className={clsx('absolute -inset-0.5', cell.fill === 'yellow' ? 'bg-[#ffff54]' : 'bg-black')} />
                  )}
                  {cell && <CellContent cell={cell} />}
                  {row.line === 'single' && i < 3 && <span className="absolute -right-0.5 -bottom-0.5 left-0 h-0.5 bg-black" />}
                  {row.line === 'double' && i < 3 && (
                    <span className="absolute -right-0.5 -bottom-1 left-0 z-10 h-1.5 border-y-2 border-black bg-white" />
                  )}
                  {cell?.selected && (
                    <span className="absolute -inset-1 z-10 border-4 border-[#3a7349]">
                      <span className="block h-full border-2 border-white" />
                      <span className="absolute -right-1.5 -bottom-1.5 size-3 border-t-2 border-l-2 border-white bg-[#3a7349]" />
                    </span>
                  )}
                </td>
              );
            })}
          </tr>
        ))}
      </tbody>
    </table>
  </div>
);

const SheetTabs = () => (
  <div className="flex h-[52px] shrink-0 items-start border-t-2 border-[#666666] bg-[#323232]">
    <Tool label="Previous sheet" className="ml-[30px] h-[52px]">
      <Icon w={14} h={20}><path d="M14 0v20L0 10z" fill="#6b6b6b" stroke="none" /></Icon>
    </Tool>
    <Tool label="Next sheet" className="ml-8 h-[52px]">
      <Icon w={14} h={20}><path d="M0 0v20l14-10z" fill="#6b6b6b" stroke="none" /></Icon>
    </Tool>
    <button type="button" className="-mt-0.5 ml-8 h-[46px] w-[156px] rounded-b-md bg-white pt-1 text-[23px] font-semibold text-[#458355]">
      Sheet1
    </button>
    <Tool label="New sheet" className="ml-[30px] h-12">
      <Icon w={20} h={20}><path d="M10 0v20M0 10h20" stroke="#b8b8b8" strokeWidth="4" /></Icon>
    </Tool>
    <span className="ml-[26px] h-[42px] w-0.5 bg-[#666666]" />
  </div>
);

const StatusBar = () => (
  <footer className="flex h-[46px] shrink-0 items-center border-t-2 border-black bg-linear-to-b from-[#494949] to-[#3a3a3a] text-[24px] text-[#ececec]">
    <span className="ml-[47px]">Ready</span>
    <button type="button" className="ml-10 flex items-center gap-1">
      <Icon w={32} h={30}>
        <path
          d="M10 8a4 4 0 1 1 5 0M10 8 4 5C1 5 0 8 3 10l6 3v6L5 27c0 3 3 3 4 1l3-7M15 8l6-3c3 0 4 3 1 5l-6 3v5M15 23l5 6L32 15"
          stroke="#ececec"
        />
      </Icon>
      Accessibility: Good to go
    </button>
    <div className="ml-auto flex h-full items-center">
      <Tool label="Normal view" className="h-full w-[74px] justify-center bg-[#5b5b5b]">
        <Icon w={26} h={26}><path d="M1 1h24v24H1zM9 1v24M17 1v24M1 9h24M1 17h24" stroke="#fff" /></Icon>
      </Tool>
      <Tool label="Page layout view" className="ml-[21px]">
        <Icon w={28} h={26}><path d="M1 1h26v24H1zM7 5h14v16H7zM10 9h8M10 13h8M10 17h8" stroke="#fff" /></Icon>
      </Tool>
      <Tool label="Page break view" className="ml-[43px]">
        <Icon w={28} h={26}><path d="M1 1h26v24H1zM1 15h17V1M9 1v14" stroke="#fff" /></Icon>
      </Tool>
      <Tool label="Zoom out" className="ml-[38px]">
        <Icon w={16} h={4}><path d="M0 2h16" stroke="#fff" strokeWidth="4" /></Icon>
      </Tool>
      <input
        type="range"
        aria-label="Zoom"
        defaultValue={50}
        className="ml-3.5 h-2 w-[200px] appearance-none rounded-full bg-[#7d7d7d] [&::-webkit-slider-thumb]:size-8 [&::-webkit-slider-thumb]:appearance-none [&::-webkit-slider-thumb]:rounded-full [&::-webkit-slider-thumb]:bg-[#a3a3a3]"
      />
      <Tool label="Zoom in" className="ml-3.5">
        <Icon w={16} h={16}><path d="M8 0v16M0 8h16" stroke="#fff" strokeWidth="4" /></Icon>
      </Tool>
      <span className="w-[146px] pl-9">101%</span>
    </div>
  </footer>
);

export default function App() {
  return (
    <div className="flex h-screen flex-col overflow-hidden bg-[#282828] font-['Inter']">
      <TitleBar />
      <TabBar />
      <Ribbon />
      <FormulaBar />
      <div className="h-1.5 shrink-0 border-y-2 border-[#b3b3b3] bg-white" />
      <Sheet />
      <SheetTabs />
      <StatusBar />
    </div>
  );
}
